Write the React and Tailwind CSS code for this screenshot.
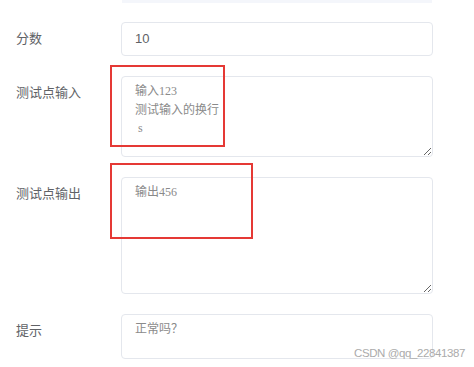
import React from "react";

const sans = { fontFamily: '"Liberation Sans", "Noto Sans CJK SC", sans-serif' };
const serif = { fontFamily: '"Liberation Serif", "Noto Sans CJK SC", serif' };

function Row({ label, children }) {
  return (
    <div className="flex">
      <div className="w-[121px] shrink-0 pl-4 h-[34px] leading-[34px] text-[13px] text-[#606266]" style={sans}>
        {label}
      </div>
      <div className="w-[312px] shrink-0">{children}</div>
    </div>
  );
}

function Area({ h, value, resize = true }) {
  return (
    <textarea
      readOnly
      value={value}
      className={`block w-full border border-[#e4e7ed] rounded-[4px] bg-white px-[13px] pt-[5px] text-[12px] leading-[18.5px] text-[#8a8a8a] outline-none ${resize ? "resize-y" : "resize-none"}`}
      style={{ ...serif, height: h }}
    />
  );
}

export default function App() {
  return (
    <div className="relative w-[474px] h-[367px] bg-white overflow-hidden">
      <div className="ml-[122px] w-[310px] h-[3px] bg-[#f4f6fb]" />
      <div className="flex flex-col gap-5 pt-[19px]">
        <Row label="分数">
          <div className="h-[34px] border border-[#e4e7ed] rounded-[4px] pl-[13px] leading-[32px] text-[13px] text-[#606266]" style={sans}>
            10
          </div>
        </Row>
        <Row label="测试点输入">
          <Area h={81} value={"输入123\n测试输入的换行\n s"} />
        </Row>
        <Row label="测试点输出">
          <Area h={117} value={"输出456"} />
        </Row>
        <Row label="提示">
          <Area h={45} value={"正常吗？"} resize={false} />
        </Row>
      </div>
      <div className="absolute left-[110px] top-[65px] w-[115px] h-[82px] border-2 border-[#e53935]" />
      <div className="absolute left-[110px] top-[163px] w-[143px] h-[76px] border-2 border-[#e53935]" />
      <div className="absolute left-[354px] top-[345px] text-[11.5px] leading-[16px] tracking-[-0.4px] text-[#ababab]" style={sans}>
        CSDN @qq_22841387
      </div>
    </div>
  );
}
